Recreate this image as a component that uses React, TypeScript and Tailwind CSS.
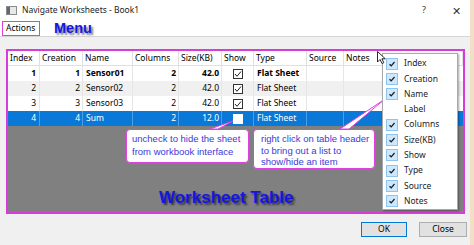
import React from "react";

const ui = { fontFamily: '"Noto Sans", "Liberation Sans", sans-serif' };
const arial = { fontFamily: '"Liberation Sans", Arial, sans-serif' };

const cols = ["Index", "Creation", "Name", "Columns", "Size(KB)", "Show", "Type", "Source", "Notes"];
const rows = [
  { i: "1", c: "1", n: "Sensor01", col: "2", s: "42.0", show: true, t: "Flat Sheet", bold: true },
  { i: "2", c: "2", n: "Sensor02", col: "2", s: "42.0", show: true, t: "Flat Sheet" },
  { i: "3", c: "3", n: "Sensor03", col: "2", s: "42.0", show: true, t: "Flat Sheet" },
  { i: "4", c: "4", n: "Sum", col: "2", s: "12.0", show: false, t: "Flat Sheet", sel: true },
];
const menuItems = ["Index", "Creation", "Name", "Label", "Columns", "Size(KB)", "Show", "Type", "Source", "Notes"];

const grid = "grid grid-cols-[32px_43px_50px_46px_43px_32px_53px_37px_1fr]";

function ShowBox({ checked, sel }: { checked: boolean; sel?: boolean }) {
  return (
    <div className={`w-[10px] h-[10px] border ${sel ? "border-white bg-white" : "border-[#333] bg-white"} flex items-center justify-center`}>
      {checked && (
        <svg width="8" height="8" viewBox="0 0 8 8">
          <polyline points="1,4 3,6.3 7,1.5" fill="none" stroke="#222" strokeWidth="1" />
        </svg>
      )}
    </div>
  );
}

export default function App() {
  return (
    <div className="relative w-[474px] h-[245px] overflow-hidden flex bg-[#f0f0f0] text-black" style={ui}>
      <div className="w-[470px] flex flex-col">
        {/* title bar */}
        <div className="h-[20px] bg-white flex items-center pl-[6px]">
          <svg width="11" height="9" viewBox="0 0 11 9">
            <rect x="0.5" y="0.5" width="10" height="8" fill="#e8e8e8" stroke="#8a8a8a" />
            <rect x="1" y="1" width="3" height="7" fill="#5a6a7a" />
          </svg>
          <span className="ml-[5px] text-[8.5px] text-[#222]">Navigate Worksheets - Book1</span>
          <span className="ml-auto text-[9px] text-[#333]">?</span>
          <span className="ml-[26px] mr-[9px] text-[11px] leading-none text-[#333]">✕</span>
        </div>
        {/* menu bar */}
        <div className="h-[17px] bg-white flex items-center border-b border-[#d4d4d4]">
          <div className="ml-[2px] h-[15px] w-[38px] border-[1.5px] border-[#e03ee0] flex items-center pl-[3px] text-[8.5px]">
            Actions
          </div>
          <span
            className="ml-[14px] text-[14.5px] font-bold text-[#1414e6] leading-none"
            style={{ ...arial, textShadow: "2px 2px 2px rgba(60,60,60,0.7)" }}
          >
            Menu
          </span>
        </div>
        {/* table frame */}
        <div className="mt-[12px] ml-[6px] w-[459px] h-[165px] border-2 border-[#d83cd8] flex flex-col bg-[#808080]">
          <div className={`${grid} h-[15px] bg-white border-b border-[#e0e0e0] text-[8.5px]`}>
            {cols.map((c) => (
              <div key={c} className="border-r border-[#e0e0e0] pl-[2px] flex items-center">
                {c}
              </div>
            ))}
          </div>
          {rows.map((r, idx) => {
            const bg = r.sel ? "bg-[#0a78d7] text-white" : idx === 1 ? "bg-[#f0f0f0]" : "bg-white";
            const bd = r.sel ? "border-[#4aa0e6]" : "border-[#e6e6e6]";
            const w = r.bold ? "font-bold" : "";
            return (
              <div key={r.i} className={`${grid} h-[15px] ${bg} text-[8.5px] ${w}`}>
                <div className={`border-r ${bd} flex items-center justify-end pr-[3px]`}>{r.i}</div>
                <div className={`border-r ${bd} flex items-center justify-end pr-[2px]`}>{r.c}</div>
                <div className={`border-r ${bd} flex items-center pl-[3px]`}>{r.n}</div>
                <div className={`border-r ${bd} flex items-center justify-end pr-[2px]`}>{r.col}</div>
                <div className={`border-r ${bd} flex items-center justify-end pr-[2px]`}>{r.s}</div>
                <div className={`border-r ${bd} flex items-center pl-[11px]`}>
                  <ShowBox checked={r.show} sel={r.sel} />
                </div>
                <div className={`border-r ${bd} flex items-center pl-[3px]`}>{r.t}</div>
                <div className={`border-r ${bd}`}></div>
                <div></div>
              </div>
            );
          })}
          <div className="flex-1 flex items-end justify-start pl-[151px] pb-[2px]">
            <span
              className="text-[17px] font-bold text-[#1414e6]"
              style={{ ...arial, textShadow: "2px 2px 2px rgba(40,40,40,0.8)" }}
            >
              Worksheet Table
            </span>
          </div>
        </div>
        {/* buttons */}
        <div className="mt-[8px] flex justify-end pr-[3px] gap-[12px] text-[8.5px]">
          <div className="w-[46px] h-[15px] border border-[#0078d7] bg-[#e1e1e1] flex items-center justify-center">OK</div>
          <div className="w-[48px] h-[15px] border border-[#adadad] bg-[#e1e1e1] flex items-center justify-center">Close</div>
        </div>
      </div>
      <div className="w-[4px] bg-[#f2dfc6]"></div>

      {/* callout pointers */}
      <svg className="absolute left-0 top-0" width="474" height="245" viewBox="0 0 474 245">
        <polygon points="233,121 210,129 218,129" fill="white" stroke="#e040e0" strokeWidth="1" />
        <polygon points="385,99 340,129 349,129" fill="white" stroke="#e040e0" strokeWidth="1" />
      </svg>

      {/* callout 1 */}
      <div
        className="absolute left-[126px] top-[129px] w-[123px] h-[34px] bg-white border border-[#e040e0] rounded-[4px] pl-[5px] pt-[3px] text-[9.5px] leading-[12.5px] text-[#3a3ad8]"
        style={arial}
      >
        <div>uncheck to hide the sheet</div>
        <div>from workbook interface</div>
      </div>
      {/* callout 2 */}
      <div
        className="absolute left-[253px] top-[129px] w-[122px] h-[40px] bg-white border border-[#e040e0] rounded-[4px] pl-[7px] pt-[3px] text-[9.5px] leading-[11.5px] text-[#3a3ad8]"
        style={arial}
      >
        <div>right click on table header</div>
        <div>to bring out a list to</div>
        <div>show/hide an item</div>
      </div>

      {/* context menu */}
      <div className="absolute left-[382px] top-[53px] w-[76px] h-[157px] bg-white border border-[#a8a8a8] shadow-[1px_1px_2px_rgba(0,0,0,0.35)] pt-[2px] flex flex-col">
        {menuItems.map((m) => (
          <div key={m} className="h-[15.4px] flex items-center">
            <div className="w-[12px] h-[12px] ml-[3px] flex items-center justify-center">
              {m !== "Label" && (
                <div className="w-[12px] h-[12px] bg-[#cce8ff] border border-[#8fc4ee] flex items-center justify-center">
                  <svg width="8" height="8" viewBox="0 0 8 8">
                    <polyline points="1.5,4.2 3.2,5.8 6.5,2" fill="none" stroke="#1a1a1a" strokeWidth="1.2" />
                  </svg>
                </div>
              )}
            </div>
            <span className="ml-[6px] text-[8.5px] text-[#222]">{m}</span>
          </div>
        ))}
      </div>

      {/* cursor */}
      <svg className="absolute left-[377px] top-[51px]" width="10" height="14" viewBox="0 0 10 14">
        <path d="M0.5,0.5 L0.5,11 L3,8.5 L5,12.5 L6.8,11.7 L4.9,7.8 L8.3,7.8 Z" fill="white" stroke="#111" strokeWidth="0.9" />
      </svg>
    </div>
  );
}
